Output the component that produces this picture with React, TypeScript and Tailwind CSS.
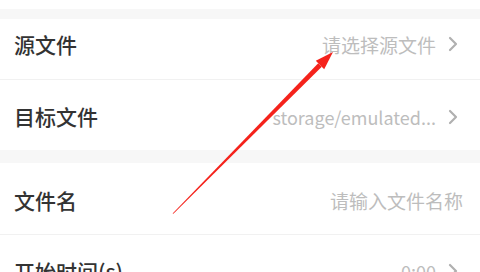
import React from "react";

const font = { fontFamily: '"Noto Sans CJK SC", "Noto Sans", Roboto, sans-serif' };

function Chevron() {
  return (
    <svg width="10" height="16" viewBox="0 0 10 16" className="ml-[12px] shrink-0">
      <polyline points="2,2 8,8 2,14" fill="none" stroke="#b0b0b0" strokeWidth="2.2" strokeLinecap="round" strokeLinejoin="round" />
    </svg>
  );
}

function Row({ label, value, chevron, className, valueClass }: { label: string; value: string; chevron?: boolean; className: string; valueClass?: string }) {
  return (
    <div className={`flex items-center justify-between bg-white pl-[14px] ${chevron ? "pr-[22px]" : "pr-[17px]"} ${className}`}>
      <span className="text-[21px] font-medium text-[#333333] leading-none">{label}</span>
      <div className="flex items-center">
        <span className={`${valueClass ?? "text-[19px]"} text-[#bdbdbd] leading-none`}>{value}</span>
        {chevron && <Chevron />}
      </div>
    </div>
  );
}

export default function App() {
  return (
    <div className="relative w-[480px] h-[272px] overflow-hidden bg-white" style={font}>
      <div className="h-[9px] bg-white" />
      <div className="h-[10px] bg-[#f7f7f7]" />
      <Row label="源文件" value="请选择源文件" chevron className="h-[60px] pb-[10px]" />
      <div className="h-px bg-[#f1f1f1]" />
      <Row label="目标文件" value="storage/emulated..." valueClass="text-[18px]" chevron className="h-[70px] pt-[3px]" />
      <div className="h-[13px] bg-[#f7f7f7]" />
      <Row label="文件名" value="请输入文件名称" className="h-[71px] pt-[3px]" />
      <div className="h-px bg-[#f1f1f1]" />
      <Row label="开始时间(s)" value="0:00" valueClass="text-[18px]" chevron className="h-[70px] pt-[2px]" />
      <svg className="absolute left-0 top-0 pointer-events-none" width="480" height="272" viewBox="0 0 480 272">
        <polygon points="172.6,213.4 173.4,213.8 321.8,66.8 318.2,63.2" fill="#f5221b" />
        <polygon points="333,52 315.8,60.8 324.2,69.2" fill="#f5221b" />
      </svg>
    </div>
  );
}
